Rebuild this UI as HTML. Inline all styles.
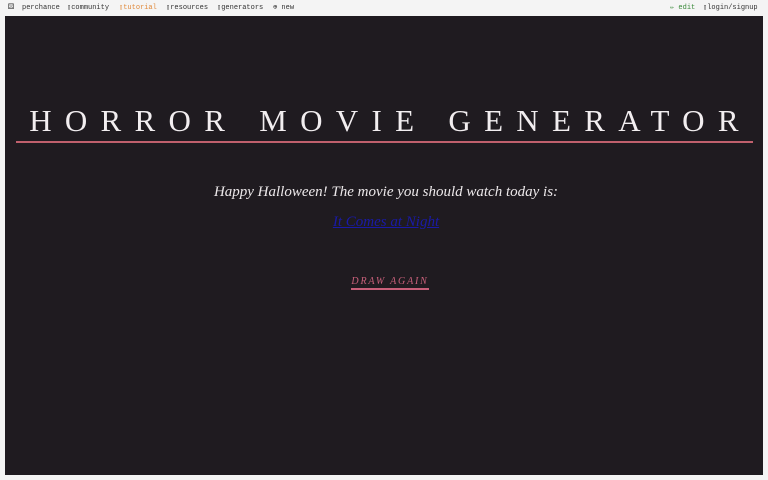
<!DOCTYPE html>
<html><head><meta charset="utf-8"><style>
html,body{margin:0;padding:0;width:768px;height:480px;background:#f4f4f4;overflow:hidden}
.bar{position:absolute;top:0;left:0;width:768px;height:16px;font-family:"Liberation Mono",monospace;font-size:7px;color:#333;line-height:17px}
.bar span{position:absolute;top:0}
.main{position:absolute;left:5px;top:16px;width:758px;height:459px;background:#1f1b20}
h1{position:absolute;left:0;top:87px;width:758px;margin:0;text-align:center;font-family:"Liberation Serif",serif;font-weight:normal;font-size:31px;letter-spacing:13.3px;color:#f2eef0;padding-left:13px;box-sizing:border-box;white-space:nowrap}
.line{position:absolute;left:11px;top:125px;width:737px;height:2px;background:#c0606d}
.t{position:absolute;left:0;width:758px;text-align:center;font-family:"Liberation Serif",serif;font-style:italic}
</style></head><body>
<div class="bar">
<span style="left:8px;font-size:10px;line-height:15px">⚄</span>
<span style="left:22px">perchance</span>
<span style="left:67px">▯community</span>
<span style="left:119px;color:#e08a3c">▯tutorial</span>
<span style="left:166px">▯resources</span>
<span style="left:217px">▯generators</span>
<span style="left:273px">⊕ new</span>
<span style="left:670px;color:#3a8a3a">✏ edit</span>
<span style="left:703px">▯login/signup</span>
</div>
<div class="main">
<h1>HORROR MOVIE GENERATOR</h1>
<div class="line"></div>
<div class="t" style="top:168px;font-size:15px;color:#ece8ea;padding-left:4px;box-sizing:border-box">Happy Halloween! The movie you should watch today is:</div>
<div class="t" style="top:198px;font-size:15px;color:#1a1aa6;text-decoration:underline;padding-left:4px;box-sizing:border-box">It Comes at Night</div>
<div class="t" style="top:260px;font-size:10px;letter-spacing:1.8px;color:#c8607a;padding-left:12px;box-sizing:border-box"><span style="border-bottom:2px solid #c8607a;padding-bottom:1px">DRAW AGAIN</span></div>
</div>
</body></html>
